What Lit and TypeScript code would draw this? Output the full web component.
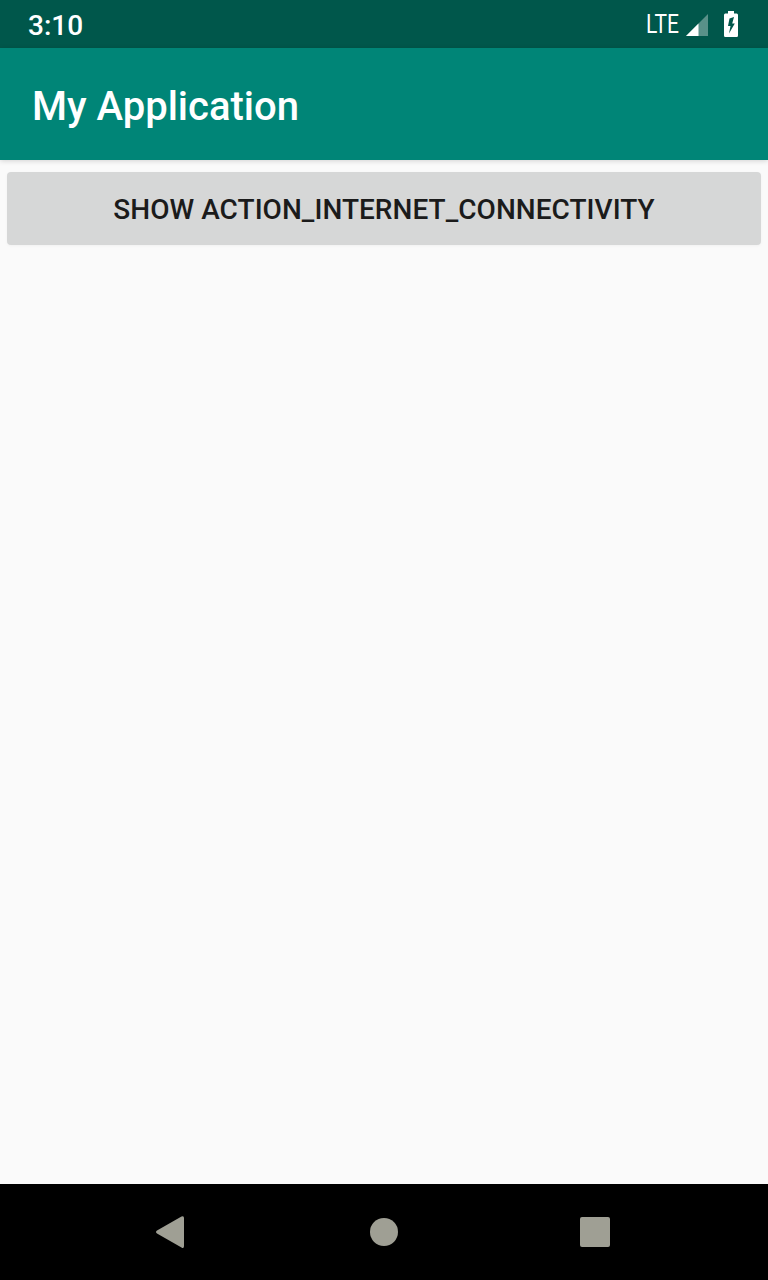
import { LitElement, html, css } from "lit";
import { customElement } from "lit/decorators.js";

@customElement("app-root")
export class AppRoot extends LitElement {
  static styles = css`
    :host {
      display: flex;
      flex-direction: column;
      height: 100vh;
      overflow: hidden;
      background: #fafafa;
      font-family: Roboto, sans-serif;
      font-weight: 500;
    }
    svg {
      display: block;
    }
    .status {
      flex: none;
      box-sizing: border-box;
      height: 48px;
      padding: 2px 28px 0;
      display: flex;
      justify-content: space-between;
      align-items: center;
      background: #00574b;
      color: #fff;
      font-size: 28px;
      line-height: 46px;
    }
    .clock {
      padding-top: 1px;
    }
    .indicators {
      display: flex;
      align-items: center;
    }
    .network {
      width: 34px;
      font-size: 25px;
      font-weight: 400;
      transform: scaleX(0.84);
      transform-origin: left center;
      white-space: nowrap;
    }
    .signal {
      margin-left: 6px;
    }
    .battery {
      margin: 0 2px 2px 16px;
    }
    .appbar {
      flex: none;
      box-sizing: border-box;
      height: 112px;
      padding: 4px 32px 0;
      display: flex;
      align-items: center;
      background: #008577;
      color: #fff;
      font-size: 40px;
      box-shadow: 0 1px 5px rgba(0, 0, 0, 0.16);
    }
    .content {
      flex: 1;
      padding: 12px 7px;
    }
    button {
      display: block;
      width: 100%;
      height: 73px;
      margin: 0;
      padding: 2px 0 0;
      border: 0;
      border-radius: 4px;
      background: #d6d7d7;
      color: #1b1b1b;
      font: 500 28px Roboto, sans-serif;
      letter-spacing: 0.04px;
      box-shadow: 0 1px 3px rgba(0, 0, 0, 0.04);
    }
    .nav {
      flex: none;
      height: 96px;
      background: #000;
    }
  `;

  render() {
    return html`
      <div class="status">
        <span class="clock">3:10</span>
        <div class="indicators">
          <span class="network">LTE</span>
          <svg class="signal" width="22" height="22" viewBox="0 0 22 22">
            <path d="M0 22 22 0V22Z" fill="#fff" fill-opacity=".35" />
            <path d="M0 22 12.500 9.500V22Z" fill="#fff" />
          </svg>
          <svg class="battery" width="14" height="26" viewBox="0 0 14 26">
            <path
              fill="#fff"
              fill-rule="evenodd"
              d="M4 0h6v2.500h2.700Q14 2.500 14 4v20.500q0 1.500-1.300 1.500H1.300Q0 26 0 24.500V4q0-1.500 1.300-1.500H4ZM10 6 5.500 7.500 4 15H6.500L5 22.500 10.800 12.500H8.200Z"
            />
          </svg>
        </div>
      </div>
      <header class="appbar">My Application</header>
      <main class="content">
        <button>SHOW ACTION_INTERNET_CONNECTIVITY</button>
      </main>
      <nav class="nav">
        <svg width="768" height="96" viewBox="0 0 768 96" fill="#9f9f94">
          <path d="M157 46.500 181.500 32.500Q184 31.500 184 34V62Q184 65 181.500 63.500L157 49.500Q155 48 157 46.500Z" />
          <circle cx="384" cy="48" r="14" />
          <rect x="580" y="33" width="30" height="30" rx="2" />
        </svg>
      </nav>
    `;
  }
}
